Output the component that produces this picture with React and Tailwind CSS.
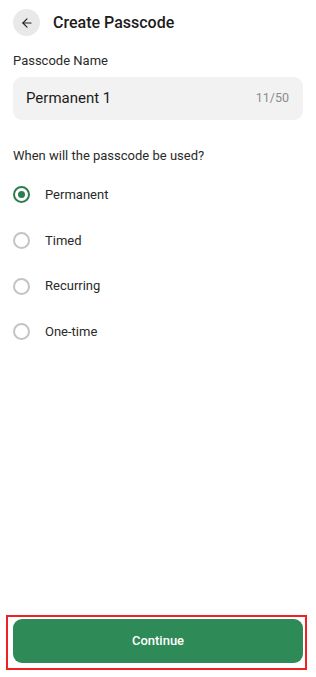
import { ArrowLeft } from 'lucide-react';
import { useState } from 'react';

const options = ['Permanent', 'Timed', 'Recurring', 'One-time'];

export default function App() {
  const [selected, setSelected] = useState('Permanent');

  return (
    <div className="w-[316px] h-[677px] flex flex-col bg-white font-['Roboto',sans-serif] text-[#1c1c1c]">
      {/* Header */}
      <div className="flex items-center pt-[9px] pl-[13px]">
        <button className="w-[27px] h-[27px] rounded-full bg-[#e9e9e9] flex items-center justify-center">
          <ArrowLeft size={14} strokeWidth={2} className="text-[#222]" />
        </button>
        <h1 className="ml-[13px] text-[16px] leading-[20px] font-medium">Create Passcode</h1>
      </div>

      {/* Name */}
      <div className="px-[13px]">
        <div className="mt-[17px] text-[13px] leading-[16px] text-[#2a2a2a]">Passcode Name</div>
        <div className="mt-[8px] h-[43px] rounded-[9px] bg-[#f2f2f2] flex items-center justify-between pl-[13px] pr-[14px]">
          <span className="text-[15px] text-[#1c1c1c]">Permanent 1</span>
          <span className="text-[12.5px] text-[#8c8c8c]">11/50</span>
        </div>

        <div className="mt-[28px] text-[13px] leading-[16px] text-[#2a2a2a]">When will the passcode be used?</div>

        <div className="mt-[8px] flex flex-col">
          {options.map((opt) => {
            const active = opt === selected;
            return (
              <div
                key={opt}
                onClick={() => setSelected(opt)}
                className="h-[45.7px] flex items-center cursor-pointer"
              >
                <div
                  className={
                    active
                      ? 'w-[17px] h-[17px] rounded-full border-2 border-[#2e7d4f] flex items-center justify-center'
                      : 'w-[17px] h-[17px] rounded-full border-2 border-[#c4c4c4]'
                  }
                >
                  {active && <div className="w-[7px] h-[7px] rounded-full bg-[#2e7d4f]"></div>}
                </div>
                <span className="ml-[15px] text-[13px] text-[#2a2a2a]">{opt}</span>
              </div>
            );
          })}
        </div>
      </div>

      <div className="flex-1"></div>

      {/* Continue */}
      <div className="ml-[6px] mr-[9px] mb-[7px] border-2 border-[#ee2222] pl-[5px] pr-[2px] pt-[2px] pb-[5px]">
        <button className="w-full h-[44px] rounded-[9px] bg-[#2e8b57] text-white text-[13px] font-medium">
          Continue
        </button>
      </div>
    </div>
  );
}
